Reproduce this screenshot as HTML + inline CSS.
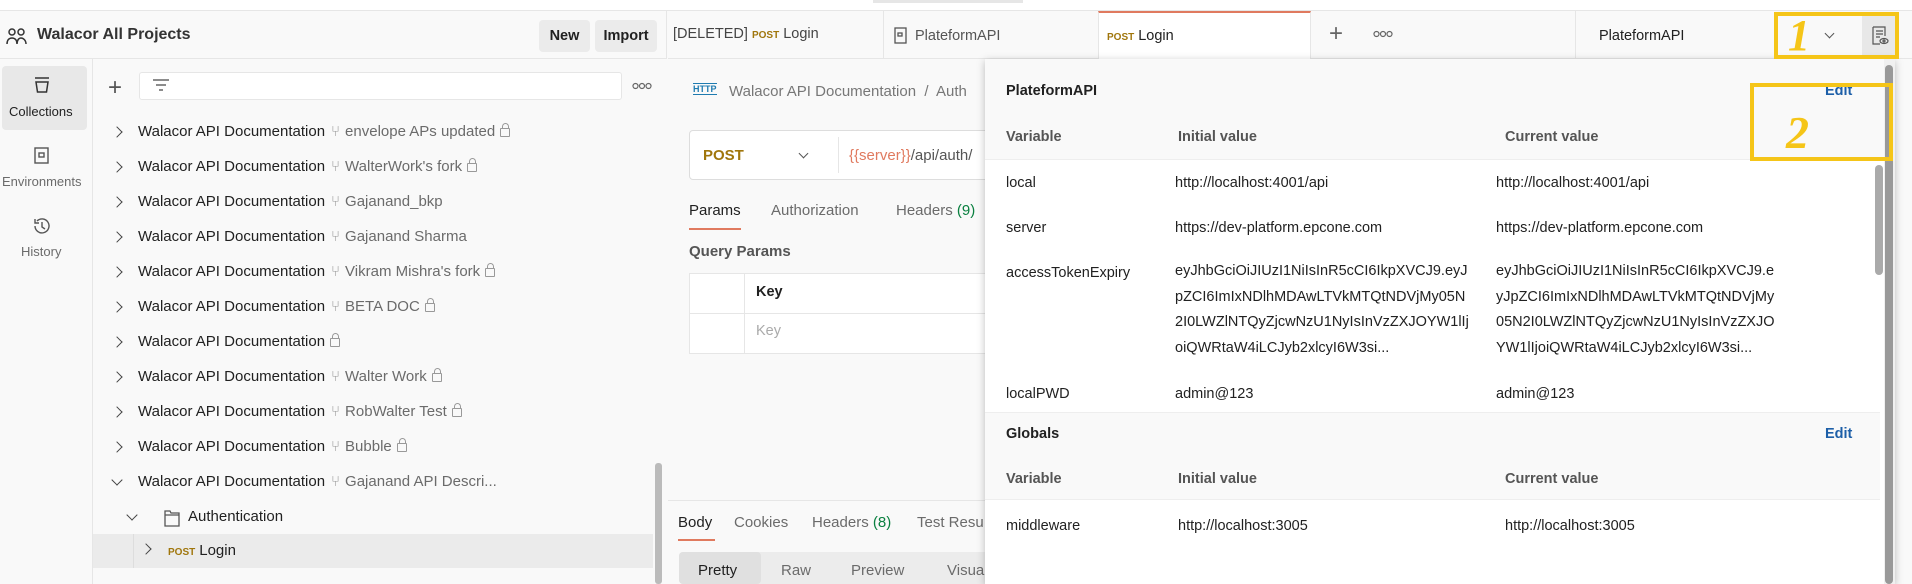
<!DOCTYPE html>
<html><head><meta charset="utf-8"><style>
*{margin:0;padding:0;box-sizing:border-box}
body{width:1912px;height:584px;overflow:hidden;background:#f9f9f9;font-family:"Liberation Sans",sans-serif;color:#212121;position:relative;font-size:15px}
.a{position:absolute;white-space:nowrap}
.g{color:#6b6b6b}
.row{position:absolute;left:93px;width:560px;height:35px}
.chev{position:absolute;left:20px;top:10px;width:8px;height:8px;border-right:1.6px solid #444;border-top:1.6px solid #444;transform:rotate(45deg)}
.chevd{position:absolute;width:8px;height:8px;border-right:1.6px solid #444;border-bottom:1.6px solid #444;transform:rotate(45deg)}
.lock{display:inline-block;width:10px;height:9px;border:1.3px solid #999;border-radius:1px;margin-left:5px;position:relative;top:1px}
.lock:before{content:"";position:absolute;left:1px;top:-6px;width:5px;height:5px;border:1.3px solid #999;border-bottom:none;border-radius:4px 4px 0 0}
.fork{color:#999;font-size:15px;margin:0 5px 0 6px}
.post{color:#a0760c;font-size:10px;font-weight:bold;margin-right:4px}
.dd{position:absolute;left:985px;top:59px;width:910px;height:525px;background:#fff;box-shadow:0 2px 8px rgba(0,0,0,.25);font-size:14.5px}
.th{color:#555}
</style></head><body>
<div class="a" style="left:0;top:0;width:1912px;height:11px;background:#fff;border-bottom:1px solid #e6e6e6"></div>
<div class="a" style="left:873px;top:0;width:150px;height:3px;background:#e6e6e6"></div>
<div class="a" style="left:0;top:11px;width:667px;height:48px;background:#f9f9f9;border-bottom:1px solid #e6e6e6;border-right:1px solid #e6e6e6"></div>
<svg class="a" style="left:6px;top:27px" width="22" height="20" viewBox="0 0 22 20" fill="none" stroke="#333" stroke-width="1.5"><circle cx="6" cy="5" r="3"/><circle cx="15" cy="5" r="3"/><path d="M1 17c0-4 2-6 5-6s5 2 5 6M11 17c0-4 2-6 4-6s5 2 5 6"/></svg>
<div class="a" style="left:37px;top:26px;font-size:16px;font-weight:bold;color:#333">Walacor All Projects</div>
<div class="a" style="left:539px;top:20px;width:51px;height:32px;background:#ebebeb;border-radius:4px;text-align:center;line-height:32px;font-weight:bold;font-size:14.5px">New</div>
<div class="a" style="left:595px;top:20px;width:62px;height:32px;background:#ebebeb;border-radius:4px;text-align:center;line-height:32px;font-weight:bold;font-size:14.5px">Import</div>
<div class="a" style="left:92px;top:59px;width:1px;height:525px;background:#e6e6e6"></div>
<div class="a" style="left:2px;top:66px;width:85px;height:64px;background:#e8e8e8;border-radius:4px"></div>
<svg class="a" style="left:33px;top:76px" width="18" height="18" viewBox="0 0 18 18" fill="none" stroke="#333" stroke-width="1.5"><path d="M2 2h14M3 6h12l-1.5 10h-9z"/></svg>
<div class="a" style="left:9px;top:104px;font-size:13px">Collections</div>
<svg class="a" style="left:33px;top:147px" width="18" height="18" viewBox="0 0 18 18" fill="none" stroke="#555" stroke-width="1.4"><rect x="2" y="1" width="13" height="15"/><rect x="6" y="6" width="5" height="4"/></svg>
<div class="a g" style="left:2px;top:174px;font-size:13px">Environments</div>
<svg class="a" style="left:32px;top:216px" width="20" height="20" viewBox="0 0 20 20" fill="none" stroke="#555" stroke-width="1.4"><path d="M3 10a7 7 0 1 0 2-5M3 3v4h4M10 6v5l3 2"/></svg>
<div class="a g" style="left:21px;top:244px;font-size:13px">History</div>
<div class="a" style="left:108px;top:74px;font-size:24px;color:#555;font-weight:300">+</div>
<div class="a" style="left:139px;top:72px;width:483px;height:28px;background:#fff;border:1px solid #e6e6e6;border-radius:3px"></div>
<svg class="a" style="left:152px;top:78px" width="18" height="16" viewBox="0 0 18 16" stroke="#666" stroke-width="1.4"><path d="M1 2h16M4 7h10M7 12h4"/></svg>
<svg class="a" style="left:632px;top:82px" width="20" height="8" viewBox="0 0 20 8" fill="none" stroke="#666" stroke-width="1.2"><circle cx="3.5" cy="4" r="2.5"/><circle cx="10" cy="4" r="2.5"/><circle cx="16.5" cy="4" r="2.5"/></svg>
<div class="row" style="top:118px"><div class="chev"></div><div class="a" style="left:45px;top:5px">Walacor API Documentation<span class="fork">⑂</span><span class="g">envelope APs updated</span><span class="lock"></span></div></div>
<div class="row" style="top:153px"><div class="chev"></div><div class="a" style="left:45px;top:5px">Walacor API Documentation<span class="fork">⑂</span><span class="g">WalterWork's fork</span><span class="lock"></span></div></div>
<div class="row" style="top:188px"><div class="chev"></div><div class="a" style="left:45px;top:5px">Walacor API Documentation<span class="fork">⑂</span><span class="g">Gajanand_bkp</span></div></div>
<div class="row" style="top:223px"><div class="chev"></div><div class="a" style="left:45px;top:5px">Walacor API Documentation<span class="fork">⑂</span><span class="g">Gajanand Sharma</span></div></div>
<div class="row" style="top:258px"><div class="chev"></div><div class="a" style="left:45px;top:5px">Walacor API Documentation<span class="fork">⑂</span><span class="g">Vikram Mishra's fork</span><span class="lock"></span></div></div>
<div class="row" style="top:293px"><div class="chev"></div><div class="a" style="left:45px;top:5px">Walacor API Documentation<span class="fork">⑂</span><span class="g">BETA DOC</span><span class="lock"></span></div></div>
<div class="row" style="top:328px"><div class="chev"></div><div class="a" style="left:45px;top:5px">Walacor API Documentation<span class="lock"></span></div></div>
<div class="row" style="top:363px"><div class="chev"></div><div class="a" style="left:45px;top:5px">Walacor API Documentation<span class="fork">⑂</span><span class="g">Walter Work</span><span class="lock"></span></div></div>
<div class="row" style="top:398px"><div class="chev"></div><div class="a" style="left:45px;top:5px">Walacor API Documentation<span class="fork">⑂</span><span class="g">RobWalter Test</span><span class="lock"></span></div></div>
<div class="row" style="top:433px"><div class="chev"></div><div class="a" style="left:45px;top:5px">Walacor API Documentation<span class="fork">⑂</span><span class="g">Bubble</span><span class="lock"></span></div></div>
<div class="row" style="top:468px"><div class="chevd" style="left:20px;top:8px"></div><div class="a" style="left:45px;top:5px">Walacor API Documentation<span class="fork">⑂</span><span class="g">Gajanand API Descri...</span></div></div>
<div class="row" style="top:503px"><div class="chevd" style="left:35px;top:8px"></div><svg class="a" style="left:71px;top:6px" width="16" height="18" viewBox="0 0 16 18" fill="none" stroke="#555" stroke-width="1.3"><path d="M1 2h5l1 2h8v13H1zM1 6h14"/></svg><div class="a" style="left:95px;top:5px">Authentication</div></div>
<div class="a" style="left:93px;top:534px;width:560px;height:34px;background:#ebebeb"></div>
<div class="a" style="left:133px;top:534px;width:1px;height:34px;background:#ddd"></div>
<div class="chev" style="left:142px;top:545px;position:absolute"></div>
<div class="a" style="left:168px;top:542px"><span class="post">POST</span>Login</div>
<div class="a" style="left:655px;top:463px;width:7px;height:121px;background:#bbb;border-radius:3px"></div>
<div class="a" style="left:668px;top:11px;width:1244px;height:48px;background:#f9f9f9;border-bottom:1px solid #e6e6e6"></div>
<div class="a" style="left:673px;top:26px;font-size:14.5px;color:#444">[DELETED] <span class="post">POST</span>Login</div>
<div class="a" style="left:883px;top:11px;width:1px;height:48px;background:#e6e6e6"></div>
<svg class="a" style="left:894px;top:27px" width="14" height="18" viewBox="0 0 14 18" fill="none" stroke="#555" stroke-width="1.3"><rect x="1" y="1" width="11" height="15"/><rect x="4" y="6" width="4" height="3"/></svg>
<div class="a" style="left:915px;top:28px;font-size:14.5px;color:#555">PlateformAPI</div>
<div class="a" style="left:1098px;top:11px;width:213px;height:48px;background:#fff;border-top:2px solid #e07a5f;border-left:1px solid #e6e6e6;border-right:1px solid #e6e6e6"></div>
<div class="a" style="left:1107px;top:28px;font-size:14.5px"><span class="post">POST</span>Login</div>
<div class="a" style="left:1329px;top:20px;font-size:24px;color:#666;font-weight:300">+</div>
<svg class="a" style="left:1373px;top:30px" width="20" height="8" viewBox="0 0 20 8" fill="none" stroke="#666" stroke-width="1.2"><circle cx="3.5" cy="4" r="2.5"/><circle cx="10" cy="4" r="2.5"/><circle cx="16.5" cy="4" r="2.5"/></svg>
<div class="a" style="left:1575px;top:11px;width:1px;height:48px;background:#e6e6e6"></div>
<div class="a" style="left:1599px;top:28px;font-size:14.5px">PlateformAPI</div>
<div class="a" style="left:1862px;top:15px;width:33px;height:40px;background:#e8e8e8"></div>
<svg class="a" style="left:1871px;top:26px" width="18" height="20" viewBox="0 0 18 20" fill="none" stroke="#555" stroke-width="1.2"><path d="M2 1h12v9M2 1v17h7M5 5h7M5 8h7M5 11h4"/><ellipse cx="13" cy="15" rx="4" ry="2.5"/><circle cx="13" cy="15" r="1"/></svg>
<div class="chevd" style="left:1826px;top:30px;width:7px;height:7px;border-color:#555;border-width:1.2px"></div>
<div class="a" style="left:693px;top:83px;font-size:9px;color:#1f7bb0;font-weight:bold;border-top:1px solid #1f7bb0;border-bottom:1px solid #1f7bb0">HTTP</div>
<div class="a" style="left:729px;top:83px;font-size:15px;color:#777">Walacor API Documentation &nbsp;/&nbsp; Auth</div>
<div class="a" style="left:689px;top:130px;width:320px;height:50px;background:#fff;border:1px solid #ddd;border-radius:4px"></div>
<div class="a" style="left:703px;top:147px;font-size:15px;color:#a0760c;font-weight:bold">POST</div>
<div class="chevd" style="left:800px;top:150px;width:7px;height:7px;border-color:#555;border-width:1.2px"></div>
<div class="a" style="left:838px;top:137px;width:1px;height:36px;background:#e6e6e6"></div>
<div class="a" style="left:849px;top:147px;font-size:15px"><span style="color:#e07a5f">{{server}}</span><span style="color:#555">/api/auth/</span></div>
<div class="a" style="left:689px;top:202px;font-size:15px">Params</div>
<div class="a" style="left:689px;top:228px;width:52px;height:2px;background:#e07a5f"></div>
<div class="a g" style="left:771px;top:202px;font-size:15px">Authorization</div>
<div class="a g" style="left:896px;top:202px;font-size:15px">Headers <span style="color:#0a8040">(9)</span></div>
<div class="a" style="left:689px;top:243px;font-size:15px;font-weight:bold;color:#555">Query Params</div>
<div class="a" style="left:689px;top:273px;width:320px;height:81px;border:1px solid #e6e6e6;background:#fff"></div>
<div class="a" style="left:744px;top:273px;width:1px;height:81px;background:#e6e6e6"></div>
<div class="a" style="left:689px;top:313px;width:320px;height:1px;background:#e6e6e6"></div>
<div class="a" style="left:756px;top:284px;font-weight:bold;font-size:14.5px">Key</div>
<div class="a" style="left:756px;top:323px;color:#aaa;font-size:14.5px">Key</div>
<div class="a" style="left:668px;top:500px;width:330px;height:1px;background:#e6e6e6"></div>
<div class="a" style="left:678px;top:514px;font-size:15px">Body</div>
<div class="a" style="left:678px;top:539px;width:37px;height:2px;background:#e07a5f"></div>
<div class="a g" style="left:734px;top:514px;font-size:15px">Cookies</div>
<div class="a g" style="left:812px;top:514px;font-size:15px">Headers <span style="color:#0a8040">(8)</span></div>
<div class="a g" style="left:917px;top:514px;font-size:15px">Test Resu</div>
<div class="a" style="left:679px;top:552px;width:330px;height:32px;background:#ececec;border-radius:4px"></div>
<div class="a" style="left:679px;top:552px;width:82px;height:32px;background:#e0e0e0;border-radius:4px"></div>
<div class="a" style="left:698px;top:562px;font-size:15px">Pretty</div>
<div class="a g" style="left:781px;top:562px;font-size:15px">Raw</div>
<div class="a g" style="left:851px;top:562px;font-size:15px">Preview</div>
<div class="a g" style="left:947px;top:562px;font-size:15px">Visua</div>
<div class="dd">
<div class="a" style="left:0;top:0;width:910px;height:100px;background:#f9f9f9"></div>
<div class="a" style="left:21px;top:24px;font-weight:bold">PlateformAPI</div>
<div class="a" style="left:840px;top:24px;color:#1d5fa8;font-weight:bold">Edit</div>
<div class="a th" style="left:21px;top:70px;font-weight:bold">Variable</div>
<div class="a th" style="left:193px;top:70px;font-weight:bold">Initial value</div>
<div class="a th" style="left:520px;top:70px;font-weight:bold">Current value</div>
<div class="a" style="left:0;top:100px;width:910px;height:1px;background:#eee"></div>
<div class="a" style="left:21px;top:116px">local</div><div class="a" style="left:190px;top:116px">http://localhost:4001/api</div><div class="a" style="left:511px;top:116px">http://localhost:4001/api</div>
<div class="a" style="left:21px;top:161px">server</div><div class="a" style="left:190px;top:161px">https://dev-platform.epcone.com</div><div class="a" style="left:511px;top:161px">https://dev-platform.epcone.com</div>
<div class="a" style="left:21px;top:206px">accessTokenExpiry</div>
<div class="a" style="left:190px;top:200px;line-height:25.5px">eyJhbGciOiJIUzI1NiIsInR5cCI6IkpXVCJ9.eyJ<br>pZCI6ImIxNDlhMDAwLTVkMTQtNDVjMy05N<br>2I0LWZlNTQyZjcwNzU1NyIsInVzZXJOYW1lIj<br>oiQWRtaW4iLCJyb2xlcyI6W3si...</div>
<div class="a" style="left:511px;top:200px;line-height:25.5px">eyJhbGciOiJIUzI1NiIsInR5cCI6IkpXVCJ9.e<br>yJpZCI6ImIxNDlhMDAwLTVkMTQtNDVjMy<br>05N2I0LWZlNTQyZjcwNzU1NyIsInVzZXJO<br>YW1lIjoiQWRtaW4iLCJyb2xlcyI6W3si...</div>
<div class="a" style="left:21px;top:327px">localPWD</div><div class="a" style="left:190px;top:327px">admin@123</div><div class="a" style="left:511px;top:327px">admin@123</div>
<div class="a" style="left:0;top:353px;width:895px;height:88px;background:#f9f9f9;border-top:1px solid #eee;border-bottom:1px solid #eee"></div>
<div class="a" style="left:21px;top:367px;font-weight:bold">Globals</div>
<div class="a" style="left:840px;top:367px;color:#1d5fa8;font-weight:bold">Edit</div>
<div class="a th" style="left:21px;top:412px;font-weight:bold">Variable</div>
<div class="a th" style="left:193px;top:412px;font-weight:bold">Initial value</div>
<div class="a th" style="left:520px;top:412px;font-weight:bold">Current value</div>
<div class="a" style="left:21px;top:459px">middleware</div><div class="a" style="left:193px;top:459px">http://localhost:3005</div><div class="a" style="left:520px;top:459px">http://localhost:3005</div>
<div class="a" style="left:890px;top:106px;width:8px;height:110px;background:#aaa;border-radius:4px"></div>
<div class="a" style="left:899px;top:0;width:11px;height:525px;background:#f0f0f0"></div>
<div class="a" style="left:900px;top:6px;width:8px;height:519px;background:#999;border-radius:4px"></div>
</div>
<div class="a" style="left:1774px;top:12px;width:125px;height:47px;border:4px solid #f5c518"></div>
<div class="a" style="left:1788px;top:12px;font-size:44px;font-style:italic;font-weight:bold;color:#f5c518;font-family:'Liberation Serif',serif;line-height:47px">1</div>
<div class="a" style="left:1750px;top:83px;width:143px;height:78px;border:4px solid #f5c518"></div>
<div class="a" style="left:1786px;top:108px;font-size:46px;font-style:italic;font-weight:bold;color:#f5c518;font-family:'Liberation Serif',serif;line-height:50px">2</div>
</body></html>
